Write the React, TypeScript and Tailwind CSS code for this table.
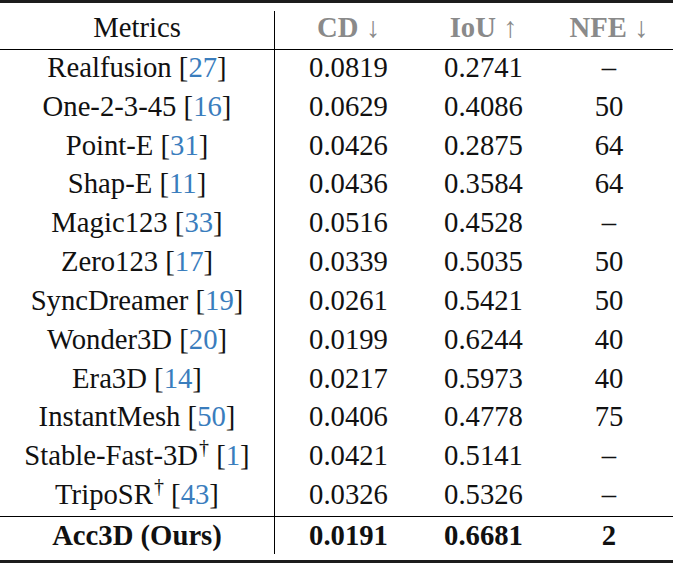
import React from "react";

type Row = {
  name: string;
  dagger?: boolean;
  cite: string;
  cd: string;
  iou: string;
  nfe: string;
};

const rows: Row[] = [
  { name: "Realfusion", cite: "27", cd: "0.0819", iou: "0.2741", nfe: "–" },
  { name: "One-2-3-45", cite: "16", cd: "0.0629", iou: "0.4086", nfe: "50" },
  { name: "Point-E", cite: "31", cd: "0.0426", iou: "0.2875", nfe: "64" },
  { name: "Shap-E", cite: "11", cd: "0.0436", iou: "0.3584", nfe: "64" },
  { name: "Magic123", cite: "33", cd: "0.0516", iou: "0.4528", nfe: "–" },
  { name: "Zero123", cite: "17", cd: "0.0339", iou: "0.5035", nfe: "50" },
  { name: "SyncDreamer", cite: "19", cd: "0.0261", iou: "0.5421", nfe: "50" },
  { name: "Wonder3D", cite: "20", cd: "0.0199", iou: "0.6244", nfe: "40" },
  { name: "Era3D", cite: "14", cd: "0.0217", iou: "0.5973", nfe: "40" },
  { name: "InstantMesh", cite: "50", cd: "0.0406", iou: "0.4778", nfe: "75" },
  { name: "Stable-Fast-3D", dagger: true, cite: "1", cd: "0.0421", iou: "0.5141", nfe: "–" },
  { name: "TripoSR", dagger: true, cite: "43", cd: "0.0326", iou: "0.5326", nfe: "–" },
];

export default function App() {
  return (
    <div
      className="w-[679px] h-[565px] bg-white text-[#111] text-[28.7px] overflow-hidden"
      style={{ fontFamily: "'Liberation Serif', 'Times New Roman', serif" }}
    >
      <div className="w-[673px]">
        {/* top rule */}
        <div className="h-[3px] bg-[#1c1c1c]" />

        {/* header */}
        <div className="flex pt-[8px] text-[#8a8a8a] font-bold leading-[32px]">
          <div className="w-[275px] h-[38px] border-r border-black text-center font-normal text-[#111]">
            Metrics
          </div>
          <div className="w-[147px] h-[38px] text-center">
            CD <span className="font-normal">↓</span>
          </div>
          <div className="w-[123px] h-[38px] text-center">
            IoU <span className="font-normal">↑</span>
          </div>
          <div className="w-[128px] h-[38px] text-center">
            NFE <span className="font-normal">↓</span>
          </div>
        </div>

        <div className="h-px bg-black" />

        {/* body */}
        {rows.map((r) => (
          <div key={r.name} className="flex h-[38.83px] leading-[35px]">
            <div className="w-[275px] border-r border-black text-center whitespace-nowrap">
              {r.name}
              {r.dagger && (
                <sup className="text-[20px] relative -top-[11px] ml-[1px]">†</sup>
              )}{" "}
              [<span className="text-[#3a7dbd]">{r.cite}</span>]
            </div>
            <div className="w-[147px] text-center">{r.cd}</div>
            <div className="w-[123px] text-center">{r.iou}</div>
            <div className="w-[128px] text-center">{r.nfe}</div>
          </div>
        ))}

        <div className="h-px bg-black" />

        {/* ours */}
        <div className="flex h-[37px] leading-[36px] font-bold">
          <div className="w-[275px] border-r border-black text-center">Acc3D (Ours)</div>
          <div className="w-[147px] text-center">0.0191</div>
          <div className="w-[123px] text-center">0.6681</div>
          <div className="w-[128px] text-center">2</div>
        </div>

        <div className="h-[6px]" />
        {/* bottom rule */}
        <div className="h-[3px] bg-[#1c1c1c]" />
      </div>
    </div>
  );
}
